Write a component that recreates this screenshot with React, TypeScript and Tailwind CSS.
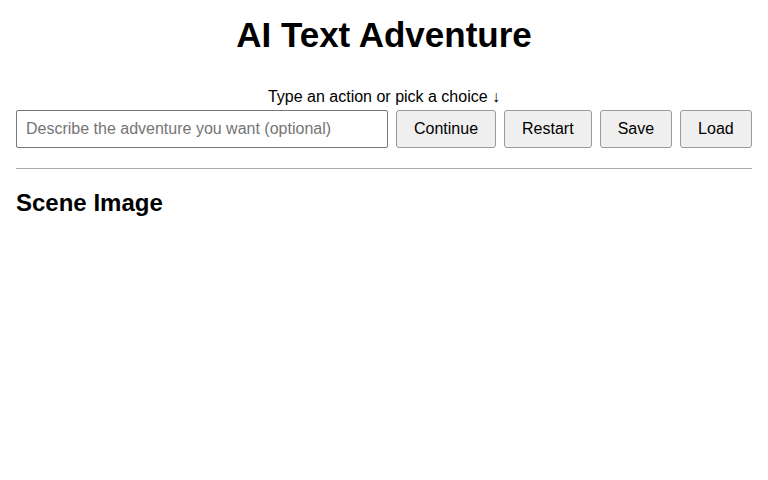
export default function App() {
  const buttons = ['Continue', 'Restart', 'Save', 'Load'];

  return (
    <div
      className="min-h-screen bg-white px-4 pt-[15px] text-black"
      style={{ fontFamily: '"Liberation Sans", Arial, sans-serif' }}
    >
      <h1 className="text-center text-[35px] font-bold leading-[40px]">
        AI Text Adventure
      </h1>

      <div className="mt-[33px] text-center text-base leading-[18px]">
        Type an action or pick a choice ↓
      </div>

      <div className="mt-[4px] flex gap-2">
        <input
          type="text"
          placeholder="Describe the adventure you want (optional)"
          className="h-[38px] w-[372px] rounded-[2px] border border-[#767676] px-[9px] text-base text-black placeholder:text-[#757575] outline-none"
        />
        {buttons.map((label) => (
          <button
            key={label}
            className="h-[38px] rounded-[3px] border border-[#9a9a9a] bg-[#efefef] px-[17px] text-base leading-5"
          >
            {label}
          </button>
        ))}
      </div>

      <hr className="mt-5 border-t border-[#aaaaaa]" />

      <h2 className="mt-5 text-2xl font-bold leading-[28px]">Scene Image</h2>
    </div>
  );
}
